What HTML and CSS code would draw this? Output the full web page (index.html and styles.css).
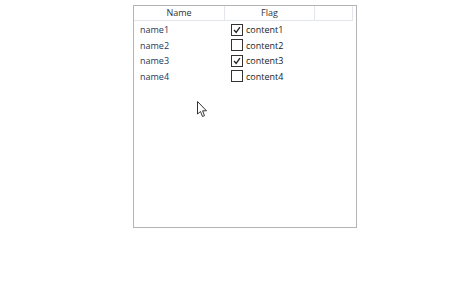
FILE: index.html
```html
<!DOCTYPE html>
<html>
<head>
<meta charset="utf-8">
<link rel="stylesheet" href="styles.css">
</head>
<body>
<div class="list">
  <div class="header">
    <div class="hcell c1">Name</div>
    <div class="hcell c2">Flag</div>
    <div class="hcell c3"></div>
  </div>
  <div class="row">
    <div class="name">name1</div>
    <div class="flag"><span class="box checked"><svg viewBox="0 0 12 12" width="12" height="12"><path d="M2.5 6 L5 9 L9.5 2.5" fill="none" stroke="#222" stroke-width="1.6"/></svg></span><span class="txt">content1</span></div>
  </div>
  <div class="row">
    <div class="name">name2</div>
    <div class="flag"><span class="box"></span><span class="txt">content2</span></div>
  </div>
  <div class="row">
    <div class="name">name3</div>
    <div class="flag"><span class="box checked"><svg viewBox="0 0 12 12" width="12" height="12"><path d="M2.5 6 L5 9 L9.5 2.5" fill="none" stroke="#222" stroke-width="1.6"/></svg></span><span class="txt">content3</span></div>
  </div>
  <div class="row">
    <div class="name">name4</div>
    <div class="flag"><span class="box"></span><span class="txt">content4</span></div>
  </div>
</div>
<svg class="cursor" width="12" height="18" viewBox="0 0 12 18"><path d="M0.5 0.5 L0.5 13 L3.5 10.5 L5.5 15.5 L7.5 14.7 L5.6 9.8 L9.5 9.8 Z" fill="#fff" stroke="#333" stroke-width="1" stroke-linejoin="round"/></svg>
</body>
</html>
```
FILE: styles.css
```css
html, body {
  margin: 0;
  padding: 0;
  background: #fff;
}
body {
  position: relative;
  width: 474px;
  height: 292px;
  font-family: "Open Sans", "Noto Sans", sans-serif;
  font-size: 9px;
}
.list {
  margin: 5px 0 0 133px;
  width: 222px;
  height: 221px;
  border: 1px solid #b4b4b4;
  box-sizing: content-box;
}
.header {
  display: grid;
  grid-template-columns: 91px 90px 38px;
  height: 14px;
  border-bottom: 1px solid #e3e6ea;
  width: 219px;
}
.hcell {
  text-align: center;
  line-height: 14px;
  color: #333;
  border-right: 1px solid #e3e6ea;
}
.c3 { border-right: 1px solid #e3e6ea; }
.row {
  display: grid;
  grid-template-columns: 91px 130px;
  height: 15.5px;
  align-items: center;
}
.row:first-of-type { margin-top: 0; }
.header + .row { margin-top: 1px; }
.name {
  padding-left: 6px;
  color: #1e3a5c;
}
.flag {
  display: flex;
  align-items: center;
  padding-left: 6px;
  color: #1a1a1a;
}
.box {
  width: 10px;
  height: 10px;
  border: 1px solid #333;
  background: #fff;
  display: inline-flex;
  align-items: center;
  justify-content: center;
  margin-right: 3px;
}
.box svg { width: 10px; height: 10px; }
.cursor {
  position: absolute;
  left: 197px;
  top: 101px;
}
```
